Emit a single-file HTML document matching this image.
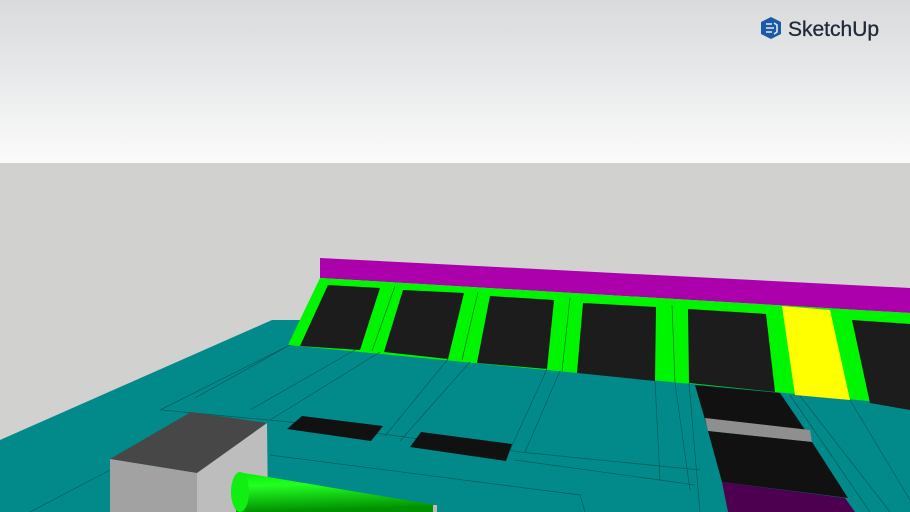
<!DOCTYPE html>
<html><head><meta charset="utf-8"><style>
html,body{margin:0;padding:0;width:910px;height:512px;overflow:hidden}
svg{display:block}
</style></head><body>
<svg width="910" height="512" viewBox="0 0 910 512" xmlns="http://www.w3.org/2000/svg">
<defs>
<linearGradient id="sky" x1="0" y1="0" x2="0" y2="1">
<stop offset="0" stop-color="#d8dadc"/><stop offset="1" stop-color="#fbfbfb"/>
</linearGradient>
<linearGradient id="cyl" x1="0" y1="0" x2="0.15" y2="1">
<stop offset="0" stop-color="#00f000"/><stop offset="0.35" stop-color="#22ff22"/><stop offset="1" stop-color="#009000"/>
</linearGradient>
</defs>
<rect x="0" y="0" width="910" height="163" fill="url(#sky)"/>
<rect x="0" y="163" width="910" height="349" fill="#d1d1cf"/>
<polygon points="0,440 272,320 320,320 910,320 910,512 0,512" fill="#028a8a"/>
<polygon points="320,258 910,288 910,313 320,278" fill="#ac00ac"/>
<polygon points="320,278 910,313 910,405 288,345" fill="#00f500"/>
<g stroke="#0a5a0a" stroke-width="0.6">
<line x1="395" y1="286" x2="372" y2="351"/>
<line x1="478" y1="292" x2="462" y2="360"/>
<line x1="570" y1="298" x2="562" y2="371"/>
<line x1="672" y1="305" x2="675" y2="382"/>
</g>
<polygon points="328,285 380,288 360,350 300,346" fill="#1c1c1c"/>
<polygon points="403,290 464,293 448,359 384,352" fill="#1c1c1c"/>
<polygon points="490,296 554,300 547,369 477,363" fill="#1c1c1c"/>
<polygon points="583,303 656,307 655,381 577,373" fill="#1c1c1c"/>
<polygon points="688,309 766,314 775,392 689,383" fill="#1c1c1c"/>
<polygon points="782,306 830,310 850,400 795,395" fill="#ffff00"/>
<polygon points="852,320 910,324 910,410 870,403" fill="#1c1c1c"/>
<polygon points="695,385 780,393 812,440 708,430" fill="#111"/>
<polygon points="705,418 810,430 812,442 708,431" fill="#8f8f8f"/>
<polygon points="708,431 812,442 848,498 722,482" fill="#111"/>
<polygon points="722,482 845,498 855,512 728,512" fill="#4e0050"/>
<g stroke="#035858" stroke-width="0.7" fill="none">
<polyline points="160,410 290,345"/>
<polyline points="162,410 290,422 520,452 700,470"/>
<polyline points="195,398 290,345"/>
<polyline points="250,410 355,350"/>
<polyline points="270,420 380,352"/>
<polyline points="385,436 448,359"/>
<polyline points="400,441 470,362"/>
<polyline points="510,450 547,369"/>
<polyline points="525,452 560,371"/>
<polyline points="515,460 660,480 695,485"/>
<polyline points="270,455 580,495 585,512"/>
<polyline points="660,480 655,381"/>
<polyline points="690,490 675,383"/>
<polyline points="700,512 689,383"/>
<polyline points="790,395 870,512"/>
<polyline points="800,396 890,512"/>
<polyline points="850,400 910,500"/>
<polyline points="30,512 110,470"/>
</g>
<polygon points="302,416 383,426 371,441 287,429" fill="#111"/>
<polygon points="421,432 512,444 506,461 410,447" fill="#111"/>
<polygon points="191,412 267,423 197,473 110,459" fill="#474747"/>
<polygon points="110,459 197,473 197,512 110,512" fill="#a2a2a2"/>
<polygon points="197,473 267,423 268,512 197,512" fill="#bdbdbd"/>
<polygon points="238,472 435,505 435,512 236,512" fill="url(#cyl)"/>
<ellipse cx="240" cy="492" rx="9" ry="20" fill="#11ee11"/>
<rect x="433" y="505" width="4" height="7" fill="#bbb"/>
<g transform="translate(761,17)">
<path d="M10 0 L20 5 L20 17 L10 22 L0 17 L0 5 Z" fill="#1b5aa6"/>
<path d="M5 7 L11 7 M5 11 L13 11 M5 15 L11 15 M13 6 L16 8 L16 15 L13 17" stroke="#e6e8ea" stroke-width="1.6" fill="none"/>
</g>
<text x="788" y="36" font-family="Liberation Sans, sans-serif" font-size="21" fill="#1e2a38" stroke="#1e2a38" stroke-width="0.3">SketchUp</text>
</svg>
</body></html>
